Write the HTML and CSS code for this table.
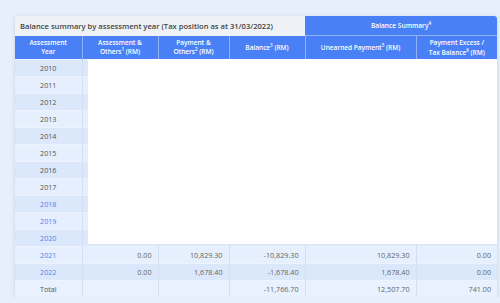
FILE: index.html
```html
<!DOCTYPE html>
<html lang="en">
<head>
    <meta charset="UTF-8">
    <title>Balance summary</title>
    <link rel="stylesheet" href="styles.css">
</head>
<body>
    <div class="card">
        <table class="summary">
            <colgroup>
                <col style="width: 67px">
                <col style="width: 76px">
                <col style="width: 71px">
                <col style="width: 76px">
                <col style="width: 111px">
                <col style="width: 81px">
            </colgroup>
            <thead>
                <tr class="title-row">
                    <th colspan="4" class="title">Balance summary by assessment year (Tax position as at 31/03/2022)</th>
                    <th colspan="2" class="group">Balance Summary<sup>4</sup></th>
                </tr>
                <tr class="head-row">
                    <th>Assessment<br>Year</th>
                    <th>Assessment &amp;<br>Others<sup>1</sup> (RM)</th>
                    <th>Payment &amp;<br>Others<sup>2</sup> (RM)</th>
                    <th>Balance<sup>3</sup> (RM)</th>
                    <th>Unearned Payment<sup>5</sup> (RM)</th>
                    <th>Payment Excess /<br>Tax Balance<sup>6</sup> (RM)</th>
                </tr>
            </thead>
            <tbody>
                <tr><td class="year">2010</td><td></td><td></td><td></td><td></td><td></td></tr>
                <tr><td class="year">2011</td><td></td><td></td><td></td><td></td><td></td></tr>
                <tr><td class="year">2012</td><td></td><td></td><td></td><td></td><td></td></tr>
                <tr><td class="year">2013</td><td></td><td></td><td></td><td></td><td></td></tr>
                <tr><td class="year">2014</td><td></td><td></td><td></td><td></td><td></td></tr>
                <tr><td class="year">2015</td><td></td><td></td><td></td><td></td><td></td></tr>
                <tr><td class="year">2016</td><td></td><td></td><td></td><td></td><td></td></tr>
                <tr><td class="year">2017</td><td></td><td></td><td></td><td></td><td></td></tr>
                <tr><td class="year link">2018</td><td></td><td></td><td></td><td></td><td></td></tr>
                <tr><td class="year link">2019</td><td></td><td></td><td></td><td></td><td></td></tr>
                <tr><td class="year link">2020</td><td></td><td></td><td></td><td></td><td></td></tr>
                <tr>
                    <td class="year link">2021</td>
                    <td>0.00</td>
                    <td>10,829.30</td>
                    <td>-10,829.30</td>
                    <td>10,829.30</td>
                    <td>0.00</td>
                </tr>
                <tr>
                    <td class="year link">2022</td>
                    <td>0.00</td>
                    <td>1,678.40</td>
                    <td>-1,678.40</td>
                    <td>1,678.40</td>
                    <td>0.00</td>
                </tr>
                <tr class="total">
                    <td class="year">Total</td>
                    <td></td>
                    <td></td>
                    <td>-11,766.70</td>
                    <td>12,507.70</td>
                    <td>741.00</td>
                </tr>
            </tbody>
        </table>
        <!-- blank panel covering the empty years -->
        <div class="blank"></div>
    </div>
</body>
</html>
```

FILE: styles.css
```css
body {
    margin: 0;
    padding: 16px 3px 0 15px;
    background: #e6effb;
    font-family: 'Open Sans', 'Noto Sans', sans-serif;
}
.card {
    position: relative;
    width: 482px;
    background: #e2edfc;
    border-radius: 3px;
    box-shadow: 0 1px 4px rgba(60, 90, 140, 0.18);
    overflow: hidden;
}
.summary {
    width: 482px;
    border-collapse: collapse;
    table-layout: fixed;
}
.summary th {
    font-weight: 600;
    padding: 0;
}
.summary sup {
    font-size: 70%;
    line-height: 0;
}
.title-row th {
    height: 19px;
}
.title {
    background: #eef2f7;
    color: #444;
    font-size: 7.6px;
    font-weight: 500;
    text-align: left;
    padding-left: 5px !important;
}
.group {
    background: #4a80f6;
    color: #fff;
    font-size: 6.6px;
    border-bottom: 1px solid #8fb2fa;
}
.head-row th {
    height: 23px;
    background: #4a80f6;
    color: #fff;
    font-size: 6.5px;
    line-height: 9.5px;
    border-left: 1px solid #8fb2fa;
}
.head-row th:first-child {
    border-left: none;
}
.summary td {
    height: 16px;
    font-size: 7.2px;
    color: #666;
    text-align: right;
    padding: 0 6px 0 0;
    border-left: 1px solid #d3e0f3;
    border-top: 1px solid #edf3fd;
}
.summary tbody tr:nth-child(odd) td {
    background: #dbe8fc;
}
.summary tbody tr:nth-child(even) td {
    background: #e5effd;
}
.summary tbody tr.total td {
    background: #e8f1fd;
}
.summary td.year {
    text-align: center;
    padding: 0;
    border-left: none;
    color: #555;
}
.summary td.link {
    color: #5580f0;
}
.blank {
    position: absolute;
    left: 73px;
    top: 43px;
    right: 0;
    height: 185px;
    background: #fff;
}
```
